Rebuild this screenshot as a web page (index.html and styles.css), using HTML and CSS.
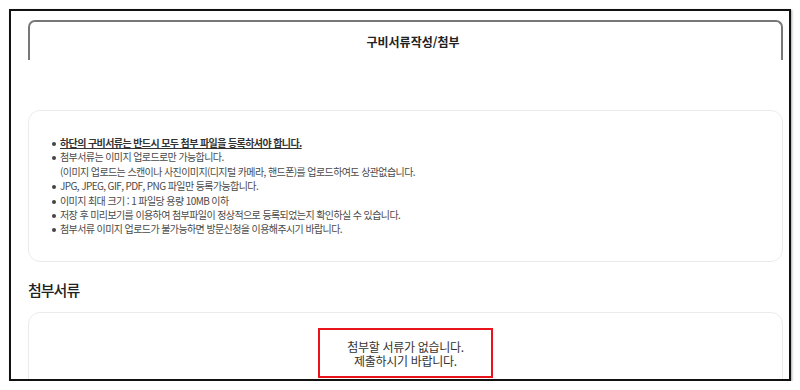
FILE: index.html
```html
<!DOCTYPE html>
<html lang="ko">
<head>
    <meta charset="UTF-8">
    <meta name="viewport" content="width=device-width, initial-scale=1.0">
    <title>구비서류작성/첨부</title>
    <link rel="stylesheet" href="styles.css">
</head>
<body>
    <div class="frame">
        <div class="tab-header">
            <span class="tab-title">구비서류작성/첨부</span>
        </div>

        <div class="notice-box">
            <ul class="notice-list">
                <li class="notice-strong">하단의 구비서류는 반드시 모두 첨부 파일을 등록하셔야 합니다.</li>
                <li>첨부서류는 이미지 업로드로만 가능합니다.<br>(이미지 업로드는 스캔이나 사진이미지(디지털 카메라, 핸드폰)를 업로드하여도 상관없습니다.</li>
                <li>JPG, JPEG, GIF, PDF, PNG 파일만 등록가능합니다.</li>
                <li>이미지 최대 크기 : 1 파일당 용량 10MB 이하</li>
                <li>저장 후 미리보기를 이용하여 첨부파일이 정상적으로 등록되었는지 확인하실 수 있습니다.</li>
                <li>첨부서류 이미지 업로드가 불가능하면 방문신청을 이용해주시기 바랍니다.</li>
            </ul>
        </div>

        <h2 class="section-title">첨부서류</h2>

        <div class="attach-box">
            <div class="empty-message">
                <div>첨부할 서류가 없습니다.</div>
                <div>제출하시기 바랍니다.</div>
            </div>
        </div>
    </div>
</body>
</html>
```

FILE: styles.css
```css
body {
    margin: 0;
    background: #fff;
    font-family: "Noto Sans CJK KR", "Noto Sans", sans-serif;
    color: #333;
}

.frame {
    margin: 9px 0 0 9px;
    width: 782px;
    height: 372px;
    box-sizing: border-box;
    border: 2.5px solid #111;
    box-shadow: 1px 1px 2px rgba(0,0,0,0.35);
    overflow: hidden;
    padding: 9px 6px 0 17px;
}

.tab-header {
    height: 38px;
    border: 2px solid #777;
    border-bottom: none;
    border-radius: 7px 7px 0 0;
    display: flex;
    align-items: center;
    justify-content: center;
    padding-left: 15px;
}

.tab-title {
    font-size: 12px;
    font-weight: bold;
    color: #222;
}

.notice-box {
    margin-top: 50px;
    border: 1px solid #ececec;
    border-radius: 12px;
    padding: 25px 20px 24px 22px;
}

.notice-list {
    list-style: none;
    margin: 0;
    padding: 0;
    font-size: 10px;
    letter-spacing: -0.6px;
    line-height: 14.4px;
    color: #4a4a4a;
}

.notice-list li {
    position: relative;
    padding-left: 9px;
}

.notice-list li:before {
    content: "";
    position: absolute;
    left: 1px;
    top: 6px;
    width: 4px;
    height: 4px;
    border-radius: 50%;
    background: #444;
}

.notice-strong {
    color: #333;
    font-weight: bold;
    text-decoration: underline;
}

.section-title {
    margin: 17px 0 11px 0;
    font-size: 15px;
    font-weight: 500;
    letter-spacing: -1px;
    color: #222;
    line-height: 22px;
}

.attach-box {
    border: 1px solid #ececec;
    border-radius: 12px;
    height: 120px;
    padding-top: 15px;
    display: flex;
    justify-content: center;
    align-items: flex-start;
}

.empty-message {
    width: 175px;
    box-sizing: border-box;
    border: 2px solid #e8141b;
    padding: 10px 0 8px 0;
    text-align: center;
    font-size: 12px;
    letter-spacing: -0.3px;
    line-height: 14px;
    color: #333;
}
```
